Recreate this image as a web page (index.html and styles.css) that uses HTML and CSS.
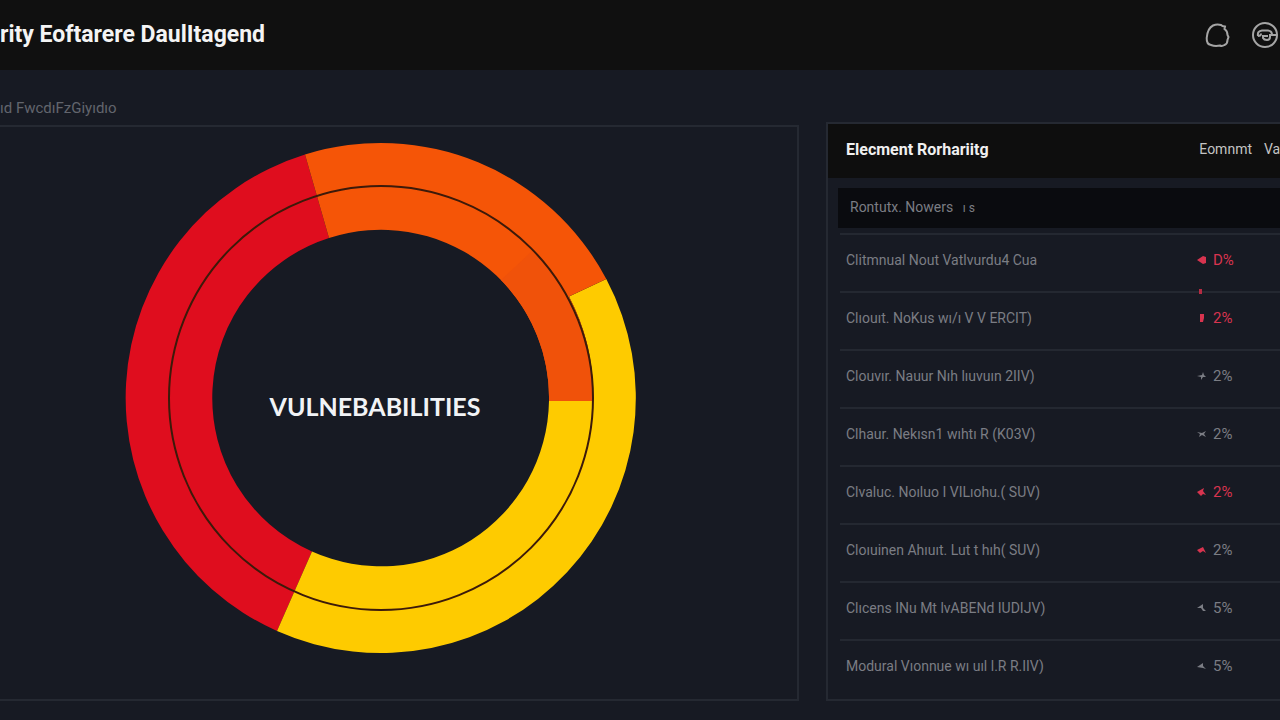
FILE: index.html
```html
<!DOCTYPE html>
<html lang="en">
<head>
  <meta charset="UTF-8" />
  <title>Dashboard</title>
  <link rel="stylesheet" href="styles.css">
</head>
<body>

  <!-- Top bar -->
  <header class="topbar">
    <h1>rity Eoftarere DaulItagend</h1>
    <div class="actions">
      <button class="icon-btn" aria-label="Notifications">
        <svg width="26" height="26" viewBox="0 0 26 26"><path d="M7 23 C4 22.500 2.500 20 2.700 16 C3.300 9 6 5 9 3.500 Q13 1.700 17 3 L18.500 4 L21 4.500 L20.500 7 Q23.500 9 23.500 13 L24.500 15 L23.500 18 Q23.500 22 20.500 23 Q18 24.500 16 23.500 Q11 24.500 7 23Z" /></svg>
      </button>
      <button class="icon-btn" aria-label="Account">
        <svg width="26" height="26" viewBox="0 0 26 26"><circle cx="13" cy="13" r="12" /><path d="M6 14 Q5 9 10 8.500 H16 Q20 9 20 13 H24 M6 14 Q9 14 9 11.500 M11 13 V16 Q12 18 15 18 Q18 18 18 15 V12 M12 14 H16" /></svg>
      </button>
    </div>
  </header>

  <main class="content">
    <!-- Chart -->
    <section class="chart-col">
      <h2>ıd FwcdıFzGiyıdıo</h2>
      <div class="chart-panel">
        <svg class="donut" viewBox="0 0 512 512">
          <path fill="#df0d1e" d="M152 489 A255 255 0 0 1 180 12.500 L204 96 A168 168 0 0 0 187 409.500Z" />
          <path fill="#fecb00" d="M152 489 A255 255 0 0 0 481.300 137 L444 154.500 A212 212 0 0 1 468 259 H424 A168 168 0 0 1 187 409.500Z" />
          <path fill="#f55507" d="M180 12.500 A255 255 0 0 1 481.300 137 L444 154.500 A212 212 0 0 1 468 259 H424 A168 168 0 0 0 204 96Z" />
          <path fill="#f0520a" d="M408 108 A212 212 0 0 1 468 259 H424 A168 168 0 0 0 376 138Z" />
          <circle cx="256" cy="256" r="212" fill="none" stroke="#3c1a0a" stroke-width="2" />
        </svg>
        <span class="donut-label">VULNEBABILITIES</span>
      </div>
    </section>

    <!-- List -->
    <section class="list-panel">
      <div class="list-head">
        <h3>Elecment Rorhariitg</h3>
        <span>Eomnmt</span>
        <span>Va</span>
      </div>
      <div class="list-filter">Rontutx. Nowers <small>ı s</small></div>
      <table>
        <tbody>
          <tr><td>Clitmnual Nout Vatlvurdu4 Cua</td><td class="red"><svg class="mark" viewBox="0 0 10 10"><path d="M0 5 L6 1 L9 2 V8 L6 9Z" /></svg>D%</td></tr>
          <tr><td>Clıouıt. NoKus wı/ı V V ERCIT)</td><td class="red tick"><svg class="mark" viewBox="0 0 10 10"><path d="M3 1 H7 V5 L6 9 H3Z" /></svg>2%</td></tr>
          <tr><td>Clouvır. Nauur Nıh lıuvuın 2IIV)</td><td><svg class="mark" viewBox="0 0 10 10"><path d="M0 5 L5 4 L6 1 L7 4 L9 6 L6 6 L4 9 L4 6Z" /></svg>2%</td></tr>
          <tr><td>Clhaur. Nekısn1 wıhtı R (K03V)</td><td><svg class="mark" viewBox="0 0 10 10"><path d="M0 3 L5 4 L9 2 L7 5 L9 8 L5 6 L2 8 L3 5Z" /></svg>2%</td></tr>
          <tr><td>Clvaluc. Noıluo I VILıohu.( SUV)</td><td class="red"><svg class="mark" viewBox="0 0 10 10"><path d="M0 5 L7 1 L6 4 L9 8 L6 7 L4 9Z" /></svg>2%</td></tr>
          <tr><td>Cloıuinen Ahıuıt. Lut t hıh( SUV)</td><td class="half"><svg class="mark" viewBox="0 0 10 10"><path d="M0 5 L6 2 L9 8 L6 6 L3 8Z" /></svg>2%</td></tr>
          <tr><td>Clıcens INu Mt lvABENd IUDIJV)</td><td><svg class="mark" viewBox="0 0 10 10"><path d="M0 5 L6 1 L6 5 L9 8 L6 8 L4 5Z" /></svg>5%</td></tr>
          <tr><td>Modural Vıonnue wı uıl l.R R.IIV)</td><td><svg class="mark" viewBox="0 0 10 10"><path d="M0 6 L6 2 L6 5 L9 8 L6 7Z" /></svg>5%</td></tr>
        </tbody>
      </table>
    </section>
  </main>

</body>
</html>
```
FILE: styles.css
```css
* {
  box-sizing: border-box;
}

body {
  margin: 0;
  min-height: 100vh;
  overflow: hidden;
  background: #171a23;
  color: #7b7d84;
  font-family: Roboto, "Liberation Sans", sans-serif;
}

h1, h2, h3 {
  margin: 0;
}

/* Top bar */
.topbar {
  display: flex;
  align-items: center;
  justify-content: space-between;
  height: 70px;
  background: #101010;
}

.topbar h1 {
  color: #f4f4f4;
  font-size: 23px;
  font-weight: 700;
  line-height: 28px;
}

.actions {
  display: flex;
  gap: 22px;
  padding-right: 2px;
}

.icon-btn {
  width: 26px;
  height: 26px;
  padding: 0;
  border: none;
  background: none;
  cursor: pointer;
}

.icon-btn svg {
  display: block;
  fill: none;
  stroke: #a5a5a5;
  stroke-width: 2;
}

/* Main area */
.content {
  display: grid;
  grid-template-columns: 799fr 454fr;
  gap: 27px;
}

.chart-col h2 {
  height: 55px;
  padding-top: 28px;
  color: #62656d;
  font-size: 15px;
  font-weight: 400;
  line-height: 20px;
}

.chart-panel {
  display: grid;
  align-items: center;
  height: 576px;
  padding: 0 160px 30px 125px;
  border: 2px solid #252932;
  border-left: none;
}

.donut,
.donut-label {
  grid-area: 1 / 1;
}

.donut {
  width: 100%;
  max-width: 512px;
}

.donut-label {
  padding-top: 16px;
  padding-right: 12px;
  color: #f1f3f6;
  font-family: Lato, sans-serif;
  font-size: 25px;
  font-weight: 700;
  text-align: center;
}

/* List */
.list-panel {
  margin-top: 52px;
  height: 579px;
  overflow: hidden;
  border: 2px solid #252932;
  border-right: none;
}

.list-head {
  display: flex;
  align-items: center;
  gap: 12px;
  height: 54px;
  padding-left: 18px;
  padding-bottom: 4px;
  background: #0e0e0e;
  color: #c4c4c4;
  font-size: 14px;
  white-space: nowrap;
}

.list-head h3 {
  flex: 1;
  color: #f0f0f0;
  font-size: 16px;
  font-weight: 700;
}

.list-head span:last-child {
  width: 16px;
}

.list-filter {
  height: 40px;
  margin: 10px 0 5px 10px;
  padding-left: 12px;
  background: #0a0b0f;
  font-size: 14px;
  line-height: 38px;
}

.list-filter small {
  margin-left: 6px;
  font-size: 12px;
}

table {
  width: 100%;
  padding-left: 12px;
  border-spacing: 0;
  font-size: 15px;
  line-height: 20px;
}

td {
  height: 58px;
  padding: 15px 0 0 6px;
  border-top: 2px solid #242831;
  vertical-align: top;
  white-space: nowrap;
}

td:first-child {
  font-size: 14px;
}

td:last-child {
  width: 89px;
}

.mark {
  width: 10px;
  height: 10px;
  margin-right: 6px;
  fill: currentColor;
}

.red {
  color: #d8344f;
}

.half .mark {
  fill: #d8344f;
}

.tick {
  position: relative;
}

/* small marker on the row divider */
.tick::after {
  content: "";
  position: absolute;
  top: -4px;
  left: 8px;
  width: 3px;
  height: 5px;
  background: #b52b42;
}
```
